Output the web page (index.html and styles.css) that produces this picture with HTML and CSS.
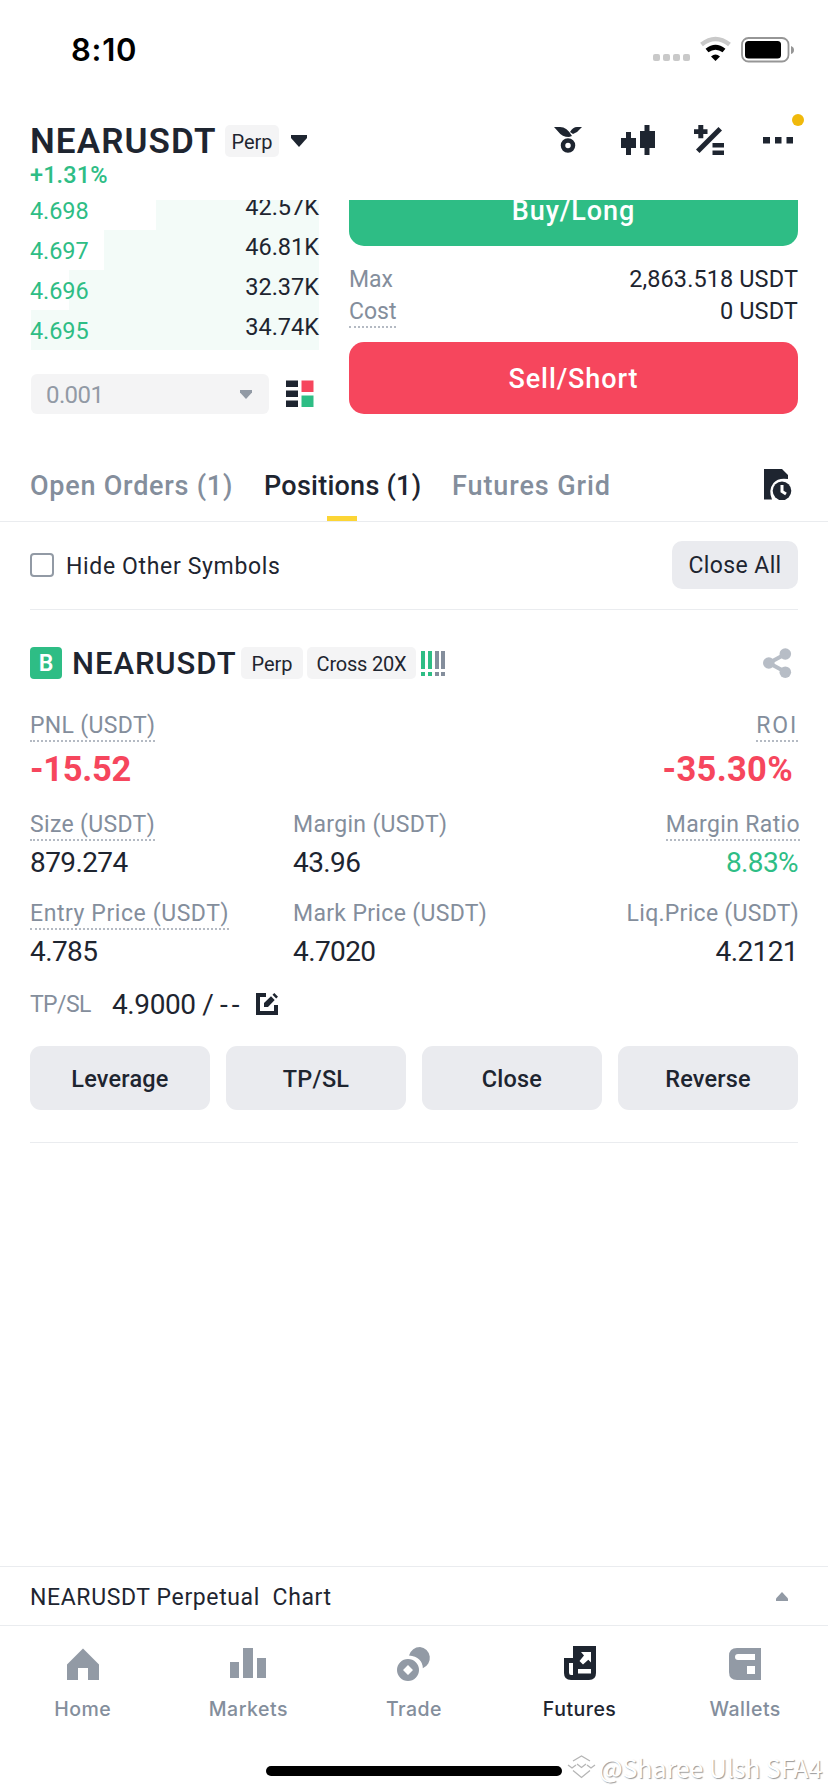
FILE: index.html
```html
<!DOCTYPE html>
<html lang="en">
<head>
<meta charset="utf-8">
<title>NEARUSDT Perp</title>
<link rel="stylesheet" href="styles.css">
</head>
<body>
<div class="screen">
  <div class="status">
    <span class="clock">8:10</span>
    <svg class="status-icons" width="142" height="26" viewBox="0 0 142 26">
      <g fill="#c9c9c9"><rect x="0" y="17" width="7" height="7" rx="2"/><rect x="10" y="17" width="7" height="7" rx="2"/><rect x="20" y="17" width="7" height="7" rx="2"/><rect x="30" y="17" width="7" height="7" rx="2"/></g>
      <path d="M48.500 7.500Q62.500 -3.500 76.500 7.500" fill="none" stroke="#c9c9c9" stroke-width="4.500"/>
      <path d="M54 13.500Q62.500 7 71 13.500" fill="none" stroke="#000" stroke-width="4.700"/>
      <path d="M58 19.500Q62.500 15.500 67 19.500L62.500 24Z" fill="#000"/>
      <rect x="89" y="1" width="46.500" height="23.500" rx="6.500" fill="none" stroke="#969696" stroke-width="1.800"/>
      <rect x="92" y="4" width="36" height="17.500" rx="3.500" fill="#000"/>
      <path d="M138 9Q141 10 141 13T138 17Z" fill="#969696"/>
    </svg>
  </div>

  <header class="head">
    <div class="pair">
      <div class="pair-row"><h1 class="pair-name">NEARUSDT</h1><span class="tag tag-head">Perp</span>
        <svg class="caret" width="16" height="12" viewBox="0 0 16 12"><path d="M0 0H16V3L8 12L0 3Z" fill="#1e2530"/></svg></div>
      <div class="change">+1.31%</div>
    </div>
    <div class="tools">
      <svg width="28" height="30" viewBox="0 0 28 30"><path d="M0 2H6Q13 2 18 11L15 12Q8 12 4.500 7Z M16 7Q19 2 23 2H28L23 7L19 9Z" fill="#1e2530"/><circle cx="14" cy="20.500" r="5" fill="none" stroke="#1e2530" stroke-width="4.500"/></svg>
      <svg width="34" height="30" viewBox="0 0 34 30"><path d="M0 13H5V7H10V13H15V23H10V30H5V23H0ZM19 6H23.500V0H28.500V6H34V23H28.500V30H23.500V23H19Z" fill="#1e2530"/></svg>
      <svg width="30" height="30" viewBox="0 0 30 30"><path d="M0 4.300H4.300V0H9.300V4.300H13.500V9H9.300V13.300H4.300V9H0ZM18.500 18H30V22.500H18.500ZM18.500 25.500H30V30H18.500ZM24.500 2L28 5.500L5.500 28L2 24.500Z" fill="#1e2530"/></svg>
      <div class="more"><svg width="30" height="30" viewBox="0 0 30 30"><path d="M0 12H7V18.500H0ZM12 12H18.500V18.500H12ZM23.500 12H30V18.500H23.500Z" fill="#1e2530"/></svg><i class="dot"></i></div>
    </div>
  </header>

  <section class="trade">
    <div class="book">
      <div class="level" style="--from:125px"><span class="price">4.698</span><span class="amount">42.57K</span></div>
      <div class="level" style="--from:73px"><span class="price">4.697</span><span class="amount">46.81K</span></div>
      <div class="level" style="--from:38px"><span class="price">4.696</span><span class="amount">32.37K</span></div>
      <div class="level" style="--from:0px"><span class="price">4.695</span><span class="amount">34.74K</span></div>
      <div class="book-foot">
        <div class="step"><span>0.001</span><svg width="12" height="9" viewBox="0 0 12 9"><path d="M0 0H12V2.500L6 9L0 2.500Z" fill="#929aa5"/></svg></div>
        <svg width="28" height="28" viewBox="0 0 28 28"><path d="M0 .5H12V7H0ZM0 10.500H12V17H0ZM0 20.500H12V27H0Z" fill="#1e2530"/><path d="M15.500 .5H27.500V12H15.500Z" fill="#f6465d"/><path d="M15.500 15.500H27.500V27H15.500Z" fill="#2ebd85"/></svg>
      </div>
    </div>
    <div class="order">
      <div class="cta buy">Buy/Long</div>
      <div class="limits">
        <div class="limit"><span class="muted">Max</span><span class="lim-val">2,863.518 USDT</span></div>
        <div class="limit"><span class="muted hint">Cost</span><span class="lim-val">0 USDT</span></div>
      </div>
      <div class="cta sell">Sell/Short</div>
    </div>
  </section>

  <nav class="tabs">
    <span class="tab t-open">Open Orders (1)</span><span class="tab t-pos active">Positions (1)</span><span class="tab t-grid">Futures Grid</span>
    <svg class="history" width="28" height="32" viewBox="0 0 28 32"><path d="M0 0H18L24 6V10Q14 8.500 9.500 14Q4 21 8 30.500H0Z" fill="#1e2530"/><circle cx="18" cy="21.800" r="9.300" fill="#1e2530"/><path d="M18 16V22.500L22 25" fill="none" stroke="#fff" stroke-width="3"/></svg>
  </nav>

  <main class="positions">
    <div class="filter"><i class="box"></i><span class="hide-label">Hide Other Symbols</span><span class="close-all">Close All</span></div>
    <article class="card">
      <div class="card-head">
        <span class="side">B</span><h2 class="card-name">NEARUSDT</h2><span class="tag tag-perp">Perp</span><span class="tag tag-cross">Cross 20X</span>
        <svg class="adl" width="25" height="25" viewBox="0 0 25 25"><path d="M0 0H4V18H0ZM0 21H4V25H0ZM7 0H11V18H7ZM7 21H11V25H7Z" fill="#2ebd85"/><path d="M14 0H18V18H14ZM14 21H18V25H14ZM20 0H24V18H20ZM20 21H24V25H20Z" fill="#848e9c"/></svg>
        <svg class="share" width="28" height="30" viewBox="0 0 28 30"><path d="M22.500 6L6 15L22.500 24" fill="none" stroke="#b7bdc6" stroke-width="4"/><circle cx="22.300" cy="6" r="5.800" fill="#b7bdc6"/><circle cx="5.800" cy="15" r="5.800" fill="#b7bdc6"/><circle cx="22.300" cy="24.200" r="5.800" fill="#b7bdc6"/></svg>
      </div>
      <div class="pnl">
        <div class="stat"><span class="muted hint">PNL (USDT)</span><b class="big">-15.52</b></div>
        <div class="stat end"><span class="muted hint roi-label">ROI</span><b class="big roi">-35.30%</b></div>
      </div>
      <div class="grid">
        <div class="stat"><span class="muted hint">Size (USDT)</span><span class="val">879.274</span></div>
        <div class="stat"><span class="muted">Margin (USDT)</span><span class="val">43.96</span></div>
        <div class="stat end"><span class="muted hint ratio">Margin Ratio</span><span class="val green">8.83%</span></div>
        <div class="stat"><span class="muted hint entry">Entry Price (USDT)</span><span class="val">4.785</span></div>
        <div class="stat"><span class="muted">Mark Price (USDT)</span><span class="val">4.7020</span></div>
        <div class="stat end"><span class="muted liq">Liq.Price (USDT)</span><span class="val">4.2121</span></div>
      </div>
      <div class="tpsl"><span class="muted tp-label">TP/SL</span><span class="val tp-val">4.9000 / <span class="dashes">--</span></span>
        <svg width="22" height="22" viewBox="0 0 22 22"><path d="M0 0H10V4H4V18H18V12H22V22H0Z" fill="#1e2530"/><path d="M8 14V10L15 3.300L18.700 7L12 14ZM16.500 1.800L18.300 0L22 3.700L20.200 5.500Z" fill="#1e2530"/></svg>
      </div>
      <div class="actions"><span>Leverage</span><span>TP/SL</span><span>Close</span><span>Reverse</span></div>
    </article>
  </main>

  <div class="chart-bar"><span class="chart-label">NEARUSDT Perpetual&nbsp; Chart</span><svg width="12" height="9" viewBox="0 0 12 9"><path d="M0 9H12V6.500L6 0L0 6.500Z" fill="#929aa5"/></svg></div>

  <nav class="bottom">
    <div class="item"><svg width="36" height="36" viewBox="0 0 36 36"><path d="M18 1.500L34 17.500V33H23V21H13V33H2V17.500Z" fill="#929aa5"/></svg><span>Home</span></div>
    <div class="item"><svg width="36" height="36" viewBox="0 0 36 36"><path d="M0 15H9V31H0ZM13 1H23V31H13ZM27 11H36V31H27Z" fill="#929aa5"/></svg><span>Markets</span></div>
    <div class="item"><svg width="36" height="36" viewBox="0 0 36 36"><path d="M13 8.500Q16 0 24 0A11 11 0 0 1 26.800 21.200Q26.500 10 13 8.500Z" fill="#929aa5"/><path fill-rule="evenodd" d="M12 12A11 11 0 1 0 12 34A11 11 0 1 0 12 12ZM12 18L17 23L12 28L7 23Z" fill="#929aa5"/></svg><span>Trade</span></div>
    <div class="item on"><svg width="36" height="36" viewBox="0 0 36 36"><path d="M11 -1H34V26Q34 33 27 33H9Q2 33 2 26V11H11Z" fill="#1e2530"/><path d="M7 16H11V28H9Q7 28 7 25.500ZM16 22H29V26.500H16ZM19 5H29V15.500L26.300 12.800L21 17.500L17.500 14L22 8.500Z" fill="#fff"/></svg><span>Futures</span></div>
    <div class="item"><svg width="36" height="36" viewBox="0 0 36 36"><path d="M10 1H34V33H10Q2 33 2 25V9Q2 1 10 1Z" fill="#929aa5"/><path d="M11 7H28V13H11Q8 13 8 10T11 7ZM20 19H28V27H20Z" fill="#fff"/></svg><span>Wallets</span></div>
  </nav>
  <div class="home-bar"></div>
  <div class="watermark"><svg width="29" height="24" viewBox="0 0 29 24"><path d="M6 6L14.500 1L23 6M1 10L5 13L9 10M10 9L14.500 12.500L19 9M20 10L24 13L28 10M6 15.500L14.500 22.500L23 15.500" fill="none" stroke="#b5b5b5" stroke-width="1.300"/></svg><span>@Sharee Ulsh SFA4</span></div>
</div>
</body>
</html>
```
FILE: styles.css
```css
* { box-sizing: border-box; }
body { margin: 0; background: #fff; }
.screen {
  position: relative; width: 828px; height: 1792px; overflow: hidden;
  display: flex; flex-direction: column;
  background: #fff; color: #1e2530;
  font: 400 23px/32px Roboto, "Noto Sans", sans-serif;
  white-space: nowrap;
}
svg { display: block; flex: none; overflow: visible; }
h1, h2 { margin: 0; font-weight: 500; }
.muted { color: #848e9c; line-height: 34px; }
.green { color: #2ebd85; }

.status { height: 100px; display: flex; align-items: center; justify-content: space-between; padding: 0 33px 0 71px; }
.clock { font: 600 31px/40px Inter, sans-serif; color: #000; letter-spacing: .7px; }

.head { height: 100px; display: flex; justify-content: space-between; padding: 22px 35px 0 30px; }
.pair-row { display: flex; align-items: center; height: 38px; }
.pair-name { font-size: 35px; font-weight: 600; line-height: 40px; height: 38px; letter-spacing: 1.1px; width: 195px; }
.tag { height: 32px; border-radius: 5px; background: #f4f4f5; font-size: 20px; line-height: 34px; text-align: center; }
.tag-head { width: 54px; font-size: 20px; }
.caret { margin-left: 12px; }
.change { margin-top: -2px; font-weight: 500; font-size: 23.5px; line-height: 34px; color: #2ebd85; letter-spacing: .1px; }
.tools { display: flex; gap: 39px; padding-top: 3px; }
.more { position: relative; }
.dot { position: absolute; left: 29px; top: -11px; width: 12px; height: 12px; border-radius: 50%; background: #f0b90b; }

.trade { height: 214px; overflow: hidden; display: flex; gap: 30px; padding: 0 30px; }
.book { width: 289px; margin-top: -10px; padding-left: 1px; }
.level { height: 40px; display: flex; justify-content: space-between; line-height: 42px; font-size: 23.5px; background: linear-gradient(#f3fbf8, #f3fbf8) no-repeat var(--from) 0; }
.price { color: #2ebd85; margin-left: -1px; letter-spacing: -.1px; }
.amount { line-height: 34px; letter-spacing: 0; }
.book-foot { display: flex; align-items: center; gap: 17px; padding-top: 24px; }
.step { width: 238px; height: 40px; border-radius: 6px; background: #f4f4f5; display: flex; align-items: center; justify-content: space-between; padding: 0 17px 0 15px; color: #929aa5; letter-spacing: -.6px; font-size: 24px; line-height: 34px; }
.step span { padding-top: 1px; }
.order { width: 449px; margin-top: -26px; }
.cta { height: 72px; border-radius: 15px; color: #fff; text-align: center; font-size: 27px; font-weight: 500; line-height: 74px; }
.buy { background: #2ebd85; letter-spacing: .9px; }
.sell { background: #f6465d; letter-spacing: .9px; }
.limits { height: 96px; padding-top: 17px; }
.limit { display: flex; justify-content: space-between; align-items: flex-start; height: 32px; }
.hint { border-bottom: 2px dotted #b4bac3; height: 33px; }
.lim-val { font-size: 23.5px; letter-spacing: .1px; }

.tabs { height: 108px; border-bottom: 1px solid #eaecef; display: flex; align-items: center; padding: 35px 36px 0 30px; font-size: 27px; font-weight: 500; color: #848e9c; }
.tab { position: relative; line-height: 74px; height: 72px; }
.t-open { width: 234px; letter-spacing: .75px; }
.t-pos { width: 157px; letter-spacing: .25px; margin-right: 31px; }
.t-grid { letter-spacing: .9px; }
.active { color: #1e2530; }
.active::after { content: ""; position: absolute; left: 63px; bottom: 0; width: 30px; height: 5px; background: #fcd535; }
.history { margin-left: auto; }

.positions { padding: 0 30px; }
.filter { height: 88px; border-bottom: 1px solid #eaecef; display: flex; align-items: center; padding-bottom: 1px; }
.box { width: 24px; height: 24px; border: 2px solid #929aa5; border-radius: 4px; margin-right: 12px; }
.hide-label { letter-spacing: .65px; padding-top: 3px; }
.close-all { margin-left: auto; width: 126px; height: 48px; border-radius: 10px; background: #eaebef; line-height: 50px; text-align: center; letter-spacing: .4px; }
.card { border-bottom: 1px solid #eaecef; height: 533px; padding-top: 37px; display: flex; flex-direction: column; }
.card-head { display: flex; align-items: center; height: 32px; }
.side { width: 32px; height: 32px; border-radius: 4px; background: #2ebd85; color: #fff; font-size: 23px; font-weight: 600; line-height: 34px; text-align: center; margin-right: 10px; }
.card-name { width: 169px; font-size: 31px; letter-spacing: .95px; line-height: 32px; padding-top: 2px; }
.tag-perp { width: 62px; margin-right: 4px; }
.tag-cross { width: 109px; letter-spacing: -.2px; }
.adl { margin-left: 5px; }
.share { margin-left: auto; margin-right: 7px; }
.stat { display: flex; flex-direction: column; align-items: flex-start; }
.stat .muted { letter-spacing: .33px; }
.end { align-items: flex-end; }
.pnl { display: flex; justify-content: space-between; height: 99px; padding-top: 30px; }
.big { font-size: 34.5px; font-weight: 700; line-height: 40px; margin-top: 7px; color: #f6465d; letter-spacing: -.3px; }
.roi { margin-right: 5px; letter-spacing: .3px; }
.stat .roi-label { letter-spacing: 1.8px; }
.grid { display: grid; grid-template-columns: 263px 235px 270px; grid-auto-rows: 89px; padding-top: 30px; height: 207px; }
.val { font-size: 28px; line-height: 42px; letter-spacing: -.6px; }
.grid .muted { height: 34px; }
.grid .hint { height: 33px; margin-bottom: 1px; }
.stat .entry { letter-spacing: .58px; }
.stat .ratio { margin-right: -2px; letter-spacing: .35px; }
.stat .liq { margin-right: -1px; letter-spacing: .28px; }
.tpsl { display: flex; align-items: center; height: 32px; margin-top: 3px; }
.tp-label { width: 82px; letter-spacing: -.6px; padding-top: 1px; }
.tp-val { width: 144px; padding-top: 2px; letter-spacing: -.4px; }
.dashes { letter-spacing: 4px; }
.actions { display: grid; grid-template-columns: repeat(4, 180px); gap: 16px; padding-top: 26px; text-align: center; font-size: 23.5px; font-weight: 500; letter-spacing: .2px; }
.actions span { height: 64px; border-radius: 11px; background: #eaebef; line-height: 66px; }

.chart-bar { margin-top: auto; height: 60px; border: solid #eaecef; border-width: 1px 0; display: flex; align-items: center; justify-content: space-between; padding: 0 40px 0 30px; }
.chart-label { letter-spacing: .62px; padding-top: 3px; }
.bottom { height: 140px; display: grid; grid-template-columns: repeat(5, 1fr); padding-top: 21px; }
.item { display: flex; flex-direction: column; align-items: center; gap: 13px; color: #848e9c; font: 500 19.5px/26px Inter, sans-serif; letter-spacing: .5px; }
.on { color: #1e2530; }
.home-bar { width: 296px; height: 10px; border-radius: 5px; background: #000; margin: 0 auto 16px; }
.watermark { position: absolute; left: 567px; top: 1747px; display: flex; align-items: center; gap: 3px; height: 40px; color: #fff; font: 400 25px/40px "Noto Sans CJK SC", sans-serif; letter-spacing: -.1px; text-shadow: 1px 1px 1px #999; }
```
